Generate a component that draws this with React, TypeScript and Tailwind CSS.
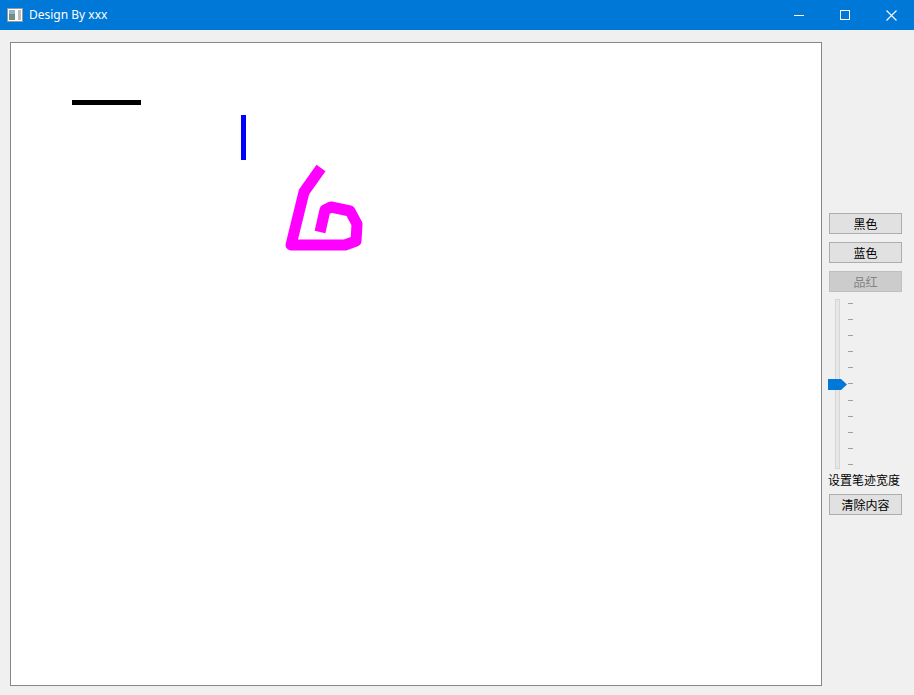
import React from 'react';

const cjk = { fontFamily: '"Microsoft YaHei", "Noto Sans CJK SC", sans-serif' };

const WinButton: React.FC<{ label: string; disabled?: boolean }> = ({ label, disabled }) => (
  <div
    style={cjk}
    className={`h-[21px] w-[73px] flex items-center justify-center text-[12px] leading-none border ${
      disabled
        ? 'bg-[#cccccc] border-[#bfbfbf] text-[#838383]'
        : 'bg-[#e1e1e1] border-[#adadad] text-black'
    }`}
  >
    {label}
  </div>
);

const TitleIcon = () => (
  <svg width="16" height="14" viewBox="0 0 16 14">
    <rect x="0.5" y="0.5" width="15" height="13" fill="#ffffff" stroke="#9a9a9a" />
    <rect x="2" y="2" width="6" height="10" fill="#6f8f7f" />
    <rect x="2" y="2" width="6" height="4" fill="#8fb3c8" />
    <rect x="11" y="2" width="3" height="10" fill="#bdbdbd" />
  </svg>
);

const App: React.FC = () => {
  const ticks = Array.from({ length: 11 });

  return (
    <div className="w-[914px] h-[695px] bg-[#f0f0f0] overflow-hidden flex flex-col">
      {/* Title bar */}
      <div className="h-[30px] bg-[#0078d7] flex items-center text-white shrink-0">
        <div className="ml-[7px] flex items-center">
          <TitleIcon />
        </div>
        <span className="ml-[6px] text-[12px]" style={{ fontFamily: '"Segoe UI", "Noto Sans", sans-serif' }}>
          Design By xxx
        </span>
        <div className="ml-auto flex h-full">
          <div className="w-[46px] h-full flex items-center justify-center">
            <svg width="10" height="10" viewBox="0 0 10 10">
              <line x1="0" y1="5.5" x2="10" y2="5.5" stroke="white" strokeWidth="1" />
            </svg>
          </div>
          <div className="w-[46px] h-full flex items-center justify-center">
            <svg width="10" height="10" viewBox="0 0 10 10">
              <rect x="0.5" y="0.5" width="9" height="9" fill="none" stroke="white" strokeWidth="1" />
            </svg>
          </div>
          <div className="w-[46px] h-full flex items-center justify-center">
            <svg width="11" height="11" viewBox="0 0 11 11">
              <path d="M0.5 0.5 L10.5 10.5 M10.5 0.5 L0.5 10.5" stroke="white" strokeWidth="1.1" />
            </svg>
          </div>
        </div>
      </div>

      {/* Body */}
      <div className="flex flex-1 items-start">
        {/* Drawing canvas */}
        <div className="mt-[12px] ml-[10px] w-[812px] h-[644px] bg-white border border-[#828790] shrink-0">
          <svg width="810" height="642" className="block">
            <line x1="61" y1="59.5" x2="130" y2="59.5" stroke="#000000" strokeWidth="5" />
            <line x1="232.5" y1="72" x2="232.5" y2="117" stroke="#0000ff" strokeWidth="5" />
            <path
              d="M310 125 L293 149 L280 202 L334 202 L345 198 L346 181 L339 168 L320 164 L314 167 L309 189"
              fill="none"
              stroke="#ff00ff"
              strokeWidth="11"
              strokeLinejoin="round"
            />
          </svg>
        </div>

        {/* Controls */}
        <div className="ml-[6px] w-[76px] pt-[183px] flex flex-col">
          <div className="pl-[1px] flex flex-col gap-[8px]">
            <WinButton label="黑色" />
            <WinButton label="蓝色" />
            <WinButton label="品红" disabled />
          </div>

          {/* Vertical slider */}
          <div className="relative mt-[7px] h-[170px] flex">
            <div className="ml-[7px] w-[5px] h-full bg-[#e7e7e7] border border-[#d6d6d6]" />
            <div className="ml-[8px] h-full flex flex-col justify-between py-[4px]">
              {ticks.map((_, i) => (
                <div key={i} className="w-[5px] h-[1px] bg-[#a0a0a0]" />
              ))}
            </div>
            <svg width="19" height="11" viewBox="0 0 19 11" className="absolute left-0 top-[80px]">
              <polygon points="0,0 13,0 19,5.5 13,11 0,11" fill="#0078d7" />
            </svg>
          </div>

          <div style={cjk} className="mt-[3px] text-[12px] leading-[16px] text-black whitespace-nowrap">
            设置笔迹宽度
          </div>
          <div className="mt-[6px] pl-[1px]">
            <WinButton label="清除内容" />
          </div>
        </div>
      </div>
    </div>
  );
};

export default App;
